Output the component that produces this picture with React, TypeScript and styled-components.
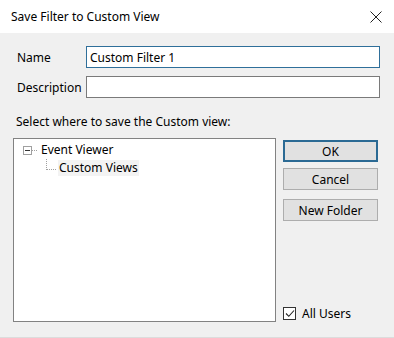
import React from 'react';
import styled, { createGlobalStyle } from 'styled-components';

const GlobalStyle = createGlobalStyle`
  html, body {
    margin: 0;
    padding: 0;
    background: #f0f0f0;
  }
  body {
    font-family: "Segoe UI", "Noto Sans", "Liberation Sans", sans-serif;
    font-size: 12px;
    color: #000;
  }
`;

const Window = styled.div`
  width: 394px;
  height: 338px;
  background: #f0f0f0;
  display: flex;
  flex-direction: column;
  box-sizing: border-box;
  border-bottom: 1px solid #dcdcdc;
`;

const TitleBar = styled.div`
  height: 33px;
  background: #fff;
  display: flex;
  align-items: center;
  justify-content: space-between;
  padding: 0 11px 0 11px;
  flex-shrink: 0;
`;

const Title = styled.span`
  font-size: 12px;
  color: #000;
`;

const CloseButton = styled.button`
  border: none;
  background: transparent;
  padding: 0;
  width: 14px;
  height: 14px;
  display: flex;
  align-items: center;
  justify-content: center;
`;

const Body = styled.div`
  flex: 1;
  display: flex;
  flex-direction: column;
  padding: 13px 13px 14px 13px;
`;

const FieldGrid = styled.div`
  display: grid;
  grid-template-columns: 73px 294px;
  row-gap: 8px;
  align-items: center;
`;

const Label = styled.label`
  padding-left: 4px;
`;

const TextInput = styled.input<{ $focused?: boolean }>`
  box-sizing: border-box;
  height: 22px;
  width: 100%;
  margin: 0;
  border: 1px solid ${({ $focused }) => ($focused ? '#2f6f9a' : '#7a7a7a')};
  background: #fff;
  font: inherit;
  padding: 0 3px;
  outline: none;
`;

const SectionLabel = styled.div`
  margin-top: 15px;
  padding-left: 3px;
`;

const Lower = styled.div`
  margin-top: 8px;
  flex: 1;
  display: flex;
  gap: 7px;
`;

const TreeBox = styled.div`
  box-sizing: border-box;
  width: 263px;
  height: 184px;
  background: #fff;
  border: 1px solid #828282;
  padding: 2px 9px;
`;

const TreeRow = styled.div<{ $indent: number }>`
  display: flex;
  align-items: center;
  height: 18px;
  padding-left: ${({ $indent }) => $indent}px;
`;

const Expander = styled.span`
  position: relative;
  box-sizing: border-box;
  width: 9px;
  height: 9px;
  border: 1px solid #a0a0a0;
  background: #fff;
  &::after {
    content: '';
    position: absolute;
    left: 1px;
    top: 3px;
    width: 5px;
    height: 1px;
    background: #333;
  }
`;

const DotH = styled.span<{ $w: number }>`
  width: ${({ $w }) => $w}px;
  height: 1px;
  margin-right: 2px;
  background-image: linear-gradient(to right, #a0a0a0 1px, transparent 1px);
  background-size: 2px 1px;
`;

const Elbow = styled.span`
  align-self: flex-start;
  width: 9px;
  height: 10px;
  margin-right: 2px;
  border-left: 1px dotted #a0a0a0;
  border-bottom: 1px dotted #a0a0a0;
`;

const NodeText = styled.span<{ $selected?: boolean }>`
  padding: 0 1px;
  background: ${({ $selected }) => ($selected ? '#f3f3f3' : 'transparent')};
  line-height: 16px;
`;

const Side = styled.div`
  flex: 1;
  display: flex;
  flex-direction: column;
  padding-left: 0;
  padding-top: 2px;
`;

const Buttons = styled.div`
  display: flex;
  flex-direction: column;
  gap: 6px;
  width: 95px;
`;

const Button = styled.button<{ $default?: boolean; $gapTop?: number }>`
  box-sizing: border-box;
  height: 22px;
  width: 95px;
  margin: 0;
  margin-top: ${({ $gapTop }) => $gapTop ?? 0}px;
  font: inherit;
  color: #000;
  background: #e1e1e1;
  border: ${({ $default }) => ($default ? '2px solid #2b6a94' : '1px solid #adadad')};
  padding: 0;
`;

const CheckRow = styled.label`
  margin-top: auto;
  display: flex;
  align-items: center;
  gap: 6px;
  margin-bottom: 1px;
`;

const CheckBox = styled.span`
  box-sizing: border-box;
  width: 13px;
  height: 13px;
  border: 1px solid #333;
  background: #fff;
  display: flex;
  align-items: center;
  justify-content: center;
`;

export default function App() {
  return (
    <>
      <GlobalStyle />
      <Window>
        <TitleBar>
          <Title>Save Filter to Custom View</Title>
          <CloseButton aria-label="Close">
            <svg width="12" height="12" viewBox="0 0 12 12">
              <path d="M0.5 0.5 L11.5 11.5 M11.5 0.5 L0.5 11.5" stroke="#222" strokeWidth="1" fill="none" />
            </svg>
          </CloseButton>
        </TitleBar>
        <Body>
          <FieldGrid>
            <Label htmlFor="name">Name</Label>
            <TextInput id="name" $focused defaultValue="Custom Filter 1" />
            <Label htmlFor="desc">Description</Label>
            <TextInput id="desc" defaultValue="" />
          </FieldGrid>
          <SectionLabel>Select where to save the Custom view:</SectionLabel>
          <Lower>
            <TreeBox>
              <TreeRow $indent={0}>
                <Expander />
                <DotH $w={6} />
                <NodeText>Event Viewer</NodeText>
              </TreeRow>
              <TreeRow $indent={23}>
                <Elbow />
                <NodeText $selected>Custom Views</NodeText>
              </TreeRow>
            </TreeBox>
            <Side>
              <Buttons>
                <Button $default>OK</Button>
                <Button>Cancel</Button>
                <Button $gapTop={3}>New Folder</Button>
              </Buttons>
              <CheckRow>
                <CheckBox>
                  <svg width="10" height="9" viewBox="0 0 10 9">
                    <path d="M1 4.5 L3.8 7.3 L9 1.5" stroke="#222" strokeWidth="1.1" fill="none" />
                  </svg>
                </CheckBox>
                All Users
              </CheckRow>
            </Side>
          </Lower>
        </Body>
      </Window>
    </>
  );
}
